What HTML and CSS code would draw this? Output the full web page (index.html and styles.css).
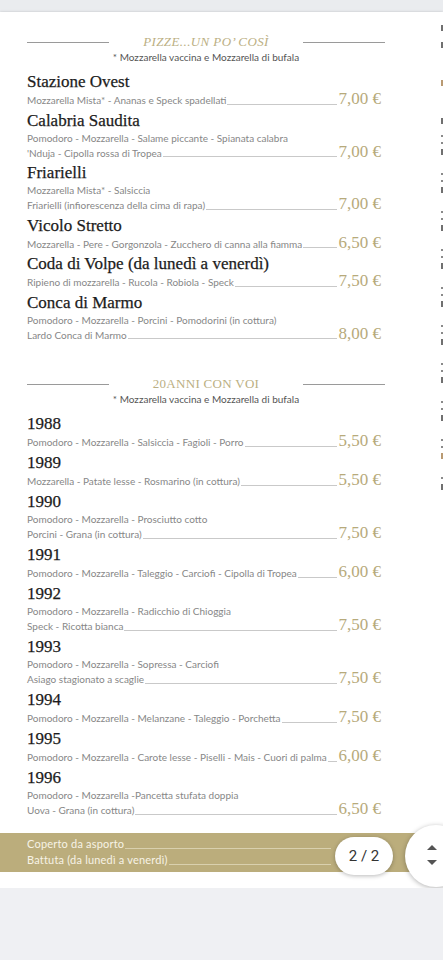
FILE: index.html
```html
<!DOCTYPE html>
<html lang="it">
<head>
    <meta charset="UTF-8">
    <meta name="viewport" content="width=device-width, initial-scale=1.0">
    <title>Menù Pizze</title>
    <link rel="stylesheet" href="styles.css">
</head>
<body>

    <div class="topbar"></div>

    <div class="sheet">
        <div class="pages">
            <div class="page">
                <div class="section">
                    <div class="section-head">
                        <span class="rule"></span>
                        <h2 class="section-title italic">PIZZE...UN PO’ COSÌ</h2>
                        <span class="rule"></span>
                    </div>
                    <p class="note">* Mozzarella vaccina e Mozzarella di bufala</p>
                    <div class="items items-a">
                        <div class="item">
                            <h3 class="name">Stazione Ovest</h3>
                            <div class="row"><span class="desc">Mozzarella Mista* - Ananas e Speck spadellati</span><span class="dots">&nbsp;</span><span class="price">7,00 €</span></div>
                        </div>
                        <div class="item">
                            <h3 class="name">Calabria Saudita</h3>
                            <div class="desc">Pomodoro - Mozzarella - Salame piccante - Spianata calabra</div>
                            <div class="row"><span class="desc">'Nduja - Cipolla rossa di Tropea</span><span class="dots">&nbsp;</span><span class="price">7,00 €</span></div>
                        </div>
                        <div class="item">
                            <h3 class="name">Friarielli</h3>
                            <div class="desc">Mozzarella Mista* - Salsiccia</div>
                            <div class="row"><span class="desc">Friarielli (infiorescenza della cima di rapa)</span><span class="dots">&nbsp;</span><span class="price">7,00 €</span></div>
                        </div>
                        <div class="item">
                            <h3 class="name">Vicolo Stretto</h3>
                            <div class="row"><span class="desc">Mozzarella - Pere - Gorgonzola - Zucchero di canna alla fiamma</span><span class="dots">&nbsp;</span><span class="price">6,50 €</span></div>
                        </div>
                        <div class="item">
                            <h3 class="name">Coda di Volpe (da lunedì a venerdì)</h3>
                            <div class="row"><span class="desc">Ripieno di mozzarella - Rucola - Robiola - Speck</span><span class="dots">&nbsp;</span><span class="price">7,50 €</span></div>
                        </div>
                        <div class="item">
                            <h3 class="name">Conca di Marmo</h3>
                            <div class="desc">Pomodoro - Mozzarella - Porcini - Pomodorini (in cottura)</div>
                            <div class="row"><span class="desc">Lardo Conca di Marmo</span><span class="dots">&nbsp;</span><span class="price">8,00 €</span></div>
                        </div>
                    </div>
                </div>

                <div class="section">
                    <div class="section-head">
                        <span class="rule"></span>
                        <h2 class="section-title">20ANNI CON VOI</h2>
                        <span class="rule"></span>
                    </div>
                    <p class="note">* Mozzarella vaccina e Mozzarella di bufala</p>
                    <div class="items items-b">
                        <div class="item">
                            <h3 class="name">1988</h3>
                            <div class="row"><span class="desc">Pomodoro - Mozzarella - Salsiccia - Fagioli - Porro</span><span class="dots">&nbsp;</span><span class="price">5,50 €</span></div>
                        </div>
                        <div class="item">
                            <h3 class="name">1989</h3>
                            <div class="row"><span class="desc">Mozzarella - Patate lesse - Rosmarino (in cottura)</span><span class="dots">&nbsp;</span><span class="price">5,50 €</span></div>
                        </div>
                        <div class="item">
                            <h3 class="name">1990</h3>
                            <div class="desc">Pomodoro - Mozzarella - Prosciutto cotto</div>
                            <div class="row"><span class="desc">Porcini - Grana (in cottura)</span><span class="dots">&nbsp;</span><span class="price">7,50 €</span></div>
                        </div>
                        <div class="item">
                            <h3 class="name">1991</h3>
                            <div class="row"><span class="desc">Pomodoro - Mozzarella - Taleggio - Carciofi - Cipolla di Tropea</span><span class="dots">&nbsp;</span><span class="price">6,00 €</span></div>
                        </div>
                        <div class="item">
                            <h3 class="name">1992</h3>
                            <div class="desc">Pomodoro - Mozzarella - Radicchio di Chioggia</div>
                            <div class="row"><span class="desc">Speck - Ricotta bianca</span><span class="dots">&nbsp;</span><span class="price">7,50 €</span></div>
                        </div>
                        <div class="item">
                            <h3 class="name">1993</h3>
                            <div class="desc">Pomodoro - Mozzarella - Sopressa - Carciofi</div>
                            <div class="row"><span class="desc">Asiago stagionato a scaglie</span><span class="dots">&nbsp;</span><span class="price">7,50 €</span></div>
                        </div>
                        <div class="item">
                            <h3 class="name">1994</h3>
                            <div class="row"><span class="desc">Pomodoro - Mozzarella - Melanzane - Taleggio - Porchetta</span><span class="dots">&nbsp;</span><span class="price">7,50 €</span></div>
                        </div>
                        <div class="item">
                            <h3 class="name">1995</h3>
                            <div class="row"><span class="desc">Pomodoro - Mozzarella - Carote lesse - Piselli - Mais - Cuori di palma</span><span class="dots">&nbsp;</span><span class="price">6,00 €</span></div>
                        </div>
                        <div class="item">
                            <h3 class="name">1996</h3>
                            <div class="desc">Pomodoro - Mozzarella -Pancetta stufata doppia</div>
                            <div class="row"><span class="desc">Uova - Grana (in cottura)</span><span class="dots">&nbsp;</span><span class="price">6,50 €</span></div>
                        </div>
                    </div>
                </div>
            </div>

            <!-- bordo della pagina successiva -->
            <div class="page peek">
                <span class="bar"></span>
                <span class="bar"></span>
                <span class="bar gold push"></span>
                <span class="bar push"></span>
                <div class="grp"><i class="dot"></i><i class="dot"></i><span class="bar"></span></div>
                <div class="grp"><i class="dot"></i><i class="dot"></i><span class="bar"></span></div>
                <div class="grp"><i class="dot"></i><i class="dot"></i><span class="bar"></span></div>
                <div class="grp"><i class="dot"></i><i class="dot"></i><span class="bar"></span></div>
                <div class="grp"><i class="dot"></i><i class="dot"></i><span class="bar"></span></div>
                <div class="grp"><i class="dot"></i><i class="dot"></i><span class="bar"></span></div>
                <div class="grp"><i class="dot"></i><i class="dot"></i><span class="bar"></span></div>
                <div class="grp"><i class="dot"></i><i class="dot"></i><span class="bar"></span></div>
                <div class="grp"><i class="dot"></i><i class="dot"></i><span class="bar gold"></span></div>
                <div class="grp"><i class="dot"></i><span class="bar"></span></div>
            </div>
        </div>

        <div class="band">
            <div class="band-row"><span>Coperto da asporto</span><span class="dots">&nbsp;</span></div>
            <div class="band-row"><span>Battuta (da lunedì a venerdì)</span><span class="dots">&nbsp;</span></div>
        </div>

        <div class="pager">2 / 2</div>
        <div class="scroll-btn">
            <svg width="10" height="20" viewBox="0 0 10 20">
                <path d="M0 5 L5 0 L10 5 Z" fill="#545454"/>
                <path d="M0 15 L5 20 L10 15 Z" fill="#545454"/>
            </svg>
        </div>
    </div>

</body>
</html>
```

FILE: styles.css
```css
body {
    margin: 0;
    width: 443px;
    overflow: hidden;
    background-color: #eff0f3;
    font-family: Lato, "Open Sans", sans-serif;
}
.topbar {
    height: 12px;
    background-color: #eaecef;
}
.sheet {
    position: relative;
    background-color: #fff;
    padding-bottom: 16px;
    box-shadow: 0 1px 3px rgba(0, 0, 0, 0.14), 0 -1px 2px rgba(0, 0, 0, 0.06);
}
.pages {
    display: flex;
    overflow: hidden;
}
.page {
    flex: 0 0 414px;
    box-sizing: border-box;
    padding: 22px 29px 4px 27px;
}
.section + .section {
    margin-top: 35.5px;
}
.section-head {
    display: flex;
    align-items: center;
}
.rule {
    flex: 0 0 82px;
    height: 1px;
    background-color: #9a9a9a;
}
.section-title {
    flex: 1;
    margin: 0;
    text-align: center;
    font-family: "Liberation Serif", serif;
    font-size: 13px;
    line-height: 16px;
    font-weight: normal;
    letter-spacing: 0.3px;
    color: #bbaf83;
}
.italic {
    font-style: italic;
    letter-spacing: 0.4px;
}
.note {
    margin: 0;
    text-align: center;
    font-size: 10px;
    line-height: 14px;
    color: #555;
}
.items {
    display: flex;
    flex-direction: column;
    margin-top: 8px;
}
.items-a {
    gap: 4.5px;
}
.items-b {
    gap: 5px;
}
.name {
    margin: 0;
    font-family: "Liberation Serif", serif;
    font-size: 17px;
    line-height: 20px;
    font-weight: normal;
    color: #1c1c1c;
    -webkit-text-stroke: 0.25px #1c1c1c;
}
.desc {
    font-size: 10px;
    line-height: 14px;
    color: #878787;
    white-space: nowrap;
}
.row {
    display: flex;
    align-items: baseline;
    height: 14px;
}
.dots {
    flex: 1;
    margin: 0 2px 0 1px;
    font-size: 10px;
    line-height: 14px;
    background: linear-gradient(#c9c9c9, #c9c9c9) no-repeat 0 10.5px / 100% 1px;
}
.price {
    margin-right: 4px;
    font-family: "Liberation Serif", serif;
    font-size: 17px;
    line-height: 14px;
    color: #b7aa7b;
}
.band {
    margin-top: 13px;
    height: 39px;
    box-sizing: border-box;
    padding: 3px 0 0 27px;
    background-color: #bbad7c;
}
.band-row {
    display: flex;
    align-items: baseline;
    width: 306px;
    font-size: 11px;
    line-height: 16px;
    letter-spacing: 0.2px;
    color: #f7f3e6;
}
.band-row .dots {
    font-size: 11px;
    line-height: 16px;
    background: linear-gradient(#d9d0ae, #d9d0ae) no-repeat 0 12px / 100% 1px;
}
.peek {
    display: flex;
    flex-direction: column;
    align-items: flex-start;
    gap: 11px;
    padding-top: 13px;
}
.bar {
    display: block;
    width: 2px;
    height: 6px;
    background-color: #707070;
}
.bar.gold {
    background-color: #b99a72;
}
.push {
    margin-top: 21px;
}
.grp {
    display: flex;
    flex-direction: column;
    gap: 5px;
    height: 27px;
}
.dot {
    display: block;
    width: 2px;
    height: 2px;
    background-color: #8a8a8a;
}
.pager {
    position: absolute;
    left: 335px;
    top: 825px;
    width: 58px;
    height: 38px;
    border-radius: 19px;
    background-color: #fff;
    box-shadow: 0 1px 4px rgba(0, 0, 0, 0.28);
    display: flex;
    align-items: center;
    justify-content: center;
    font-family: Roboto, sans-serif;
    font-size: 15px;
    color: #333;
}
.scroll-btn {
    position: absolute;
    left: 405px;
    top: 813px;
    width: 62px;
    height: 62px;
    border-radius: 50%;
    background-color: #fff;
    box-shadow: 0 1px 5px rgba(0, 0, 0, 0.3);
}
.scroll-btn svg {
    position: absolute;
    left: 22px;
    top: 19.5px;
}
```
